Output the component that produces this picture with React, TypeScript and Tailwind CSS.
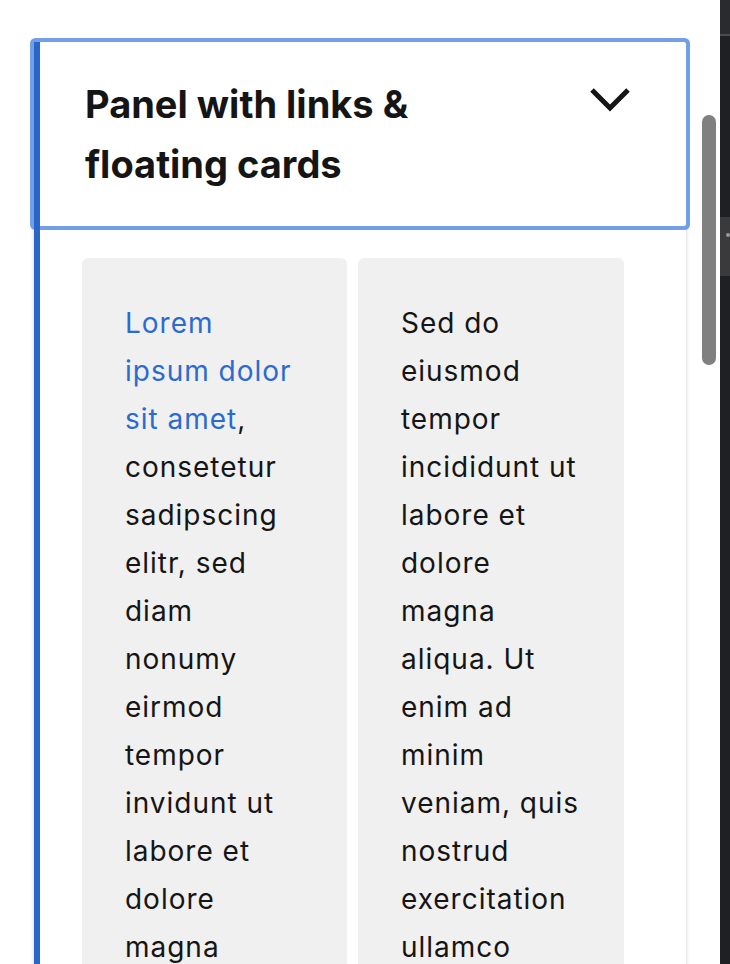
import React from "react";

const card1 = (
  <>
    <a href="#" className="text-[#2b6bcf]">
      Lorem
      <br />
      ipsum dolor
      <br />
      sit amet
    </a>
    ,<br />
    consetetur
    <br />
    sadipscing
    <br />
    elitr, sed
    <br />
    diam
    <br />
    nonumy
    <br />
    eirmod
    <br />
    tempor
    <br />
    invidunt ut
    <br />
    labore et
    <br />
    dolore
    <br />
    magna
    <br />
    aliquyam
    <br />
    erat, sed
  </>
);

const card2Lines = [
  "Sed do",
  "eiusmod",
  "tempor",
  "incididunt ut",
  "labore et",
  "dolore",
  "magna",
  "aliqua. Ut",
  "enim ad",
  "minim",
  "veniam, quis",
  "nostrud",
  "exercitation",
  "ullamco",
  "laboris nisi",
];

export default function App() {
  return (
    <div className="flex h-[964px] w-[730px] overflow-hidden bg-white">
      <div className="w-[702px] shrink-0 pl-[30px] pt-[38px]">
        <div className="relative ml-[4px] mt-[4px] w-[652px] bg-white shadow-[0_0_3px_1px_rgba(0,0,0,0.13)]">
          <button
            type="button"
            className="flex w-full items-start justify-between rounded-[2px] bg-white pb-[32px] pl-[51px] pr-[54px] pt-[32px] text-left ring-4 ring-[#739ee8]"
          >
            <span
              className="text-[38px] font-bold leading-[60px] text-[#151515]"
              style={{ fontFamily: "Inter, 'Noto Sans', sans-serif" }}
            >
              Panel with links &amp;
              <br />
              floating cards
            </span>
            <svg
              width="44"
              height="30"
              viewBox="0 0 44 30"
              className="mt-[10px] shrink-0"
              fill="none"
            >
              <path
                d="M4 6 L22 24 L40 6"
                stroke="#151515"
                strokeWidth="5"
                strokeLinejoin="miter"
              />
            </svg>
          </button>
          <div className="absolute bottom-0 left-0 top-0 z-10 w-[6px] bg-[#2a65c9]" />
          <div
            className="grid grid-cols-[265px_266px] gap-[11px] pl-[48px] pt-[32px] text-[28px] leading-[48px] tracking-[0.035em] text-[#151515]"
            style={{ fontFamily: "Inter, 'Noto Sans', sans-serif" }}
          >
            <div className="rounded-[6px] bg-[#f0f0f0] pb-[40px] pl-[43px] pr-[10px] pt-[41px]">
              {card1}
            </div>
            <div className="rounded-[6px] bg-[#f0f0f0] pb-[40px] pl-[43px] pr-[10px] pt-[41px]">
              {card2Lines.map((l, i) => (
                <React.Fragment key={i}>
                  {l}
                  {i < card2Lines.length - 1 && <br />}
                </React.Fragment>
              ))}
            </div>
          </div>
        </div>
      </div>
      <div className="w-[18px] shrink-0 pt-[115px]">
        <div className="h-[250px] w-[14px] rounded-full bg-[#808080]" />
      </div>
      <div className="flex w-[10px] shrink-0 flex-col bg-[#1f2023]">
        <div className="h-[34px] bg-[#2a2b2e]" />
        <div className="h-[2px] bg-[#4a4b4e]" />
        <div className="h-[181px]" />
        <div className="flex h-[59px] items-start bg-[#3a3a3c] pl-[6px] pt-[16px]">
          <div className="h-[4px] w-[4px] rounded-full bg-[#9a9a9a]" />
        </div>
      </div>
    </div>
  );
}
